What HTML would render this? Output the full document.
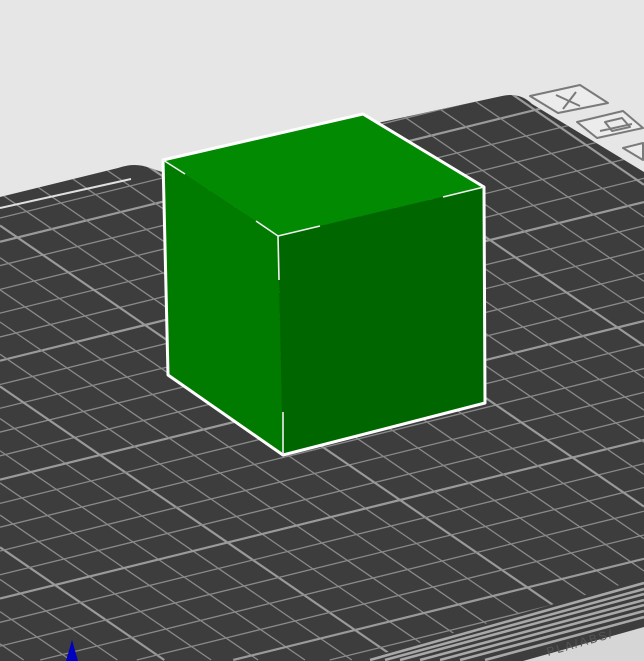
<!DOCTYPE html>
<html><head><meta charset="utf-8"><style>
html,body{margin:0;padding:0;background:#e6e6e6;width:644px;height:661px;overflow:hidden}
svg{display:block;overflow:hidden}
</style></head><body>
<svg id="s" width="644" height="661" viewBox="0 0 644 661" xmlns="http://www.w3.org/2000/svg">
<defs>
<clipPath id="bed"><path d="M0,197 L118,168 Q135,162 150,168 L168,174 L382,122 L502,96 Q520,92 532,104 L644,172 L644,578 L357,661 L0,661 Z"/></clipPath>
<clipPath id="front"><path d="M0,0 L644,0 L644,578 L357,661 L0,661 Z"/></clipPath>
</defs>
<path d="M0,197 L118,168 Q135,162 150,168 L168,174 L382,122 L502,96 Q520,92 532,104 L644,172 L644,661 L0,661 Z" fill="#3d3d3d"/>
<g id="grid" clip-path="url(#bed)"><g clip-path="url(#front)" stroke="#8a8a8a" fill="none"></g></g>
<line x1="0" y1="208" x2="131" y2="179" stroke="#e0e0e0" stroke-width="2"/>
<g stroke="#a8a8a8" stroke-width="2.6" fill="none">
<line x1="370" y1="660" x2="644" y2="583"/>
<line x1="385" y1="660" x2="644" y2="589"/>
<line x1="400" y1="660" x2="644" y2="594"/>
<line x1="420" y1="660" x2="644" y2="600"/>
<line x1="440" y1="660" x2="644" y2="605"/>
<line x1="460" y1="660" x2="644" y2="611"/>
<line x1="485" y1="660" x2="644" y2="617"/>
</g>
<path d="M523,661 L644,627 L644,661 Z" fill="#d6d6d6"/>
<text x="0" y="0" transform="translate(548,656) rotate(-16)" font-family="Liberation Sans, sans-serif" font-size="12" fill="#555" letter-spacing="2">PLA/ABS/</text>
<path d="M72,640 L78,661 L66,661 Z" fill="#0000c0"/>
<g fill="#ececec" stroke="#7a7a7a" stroke-width="2" stroke-linejoin="round">
<path d="M530,96 L580,85 L608,103 L558,113 Z"/>
<path d="M556,95 L580,106 M576,92 L563,109" fill="none"/>
<path d="M577,122 L623,111 L643,128 L597,138 Z"/>
<path d="M605,122 L622,118 L630,127 L612,131 Z M600,131 L632,124" fill="none"/>
<path d="M623,148 L643,143 L643,160 Z"/>
</g>
<polygon points="163,160 363,114 484,187 278,236" fill="#028a02"/>
<polygon points="163,160 278,236 283,455 168,375" fill="#007b00"/>
<polygon points="278,236 484,187 485,403 283,455" fill="#006700"/>
<polygon points="163,160 363,114 484,187 485,403 283,455 168,375" fill="none" stroke="#fff" stroke-width="3" stroke-linejoin="round"/>
<g stroke="#f0f0f0" stroke-width="1.6">
<line x1="278" y1="236" x2="256" y2="221"/><line x1="278" y1="236" x2="320" y2="226"/><line x1="278" y1="236" x2="279" y2="280"/>
<line x1="163" y1="160" x2="185" y2="174"/><line x1="484" y1="187" x2="443" y2="197"/><line x1="283" y1="455" x2="283" y2="412"/>
</g>
</svg>
<script>
(function(){
var g=document.querySelector('#grid g');var ns='http://www.w3.org/2000/svg';
var O=[400,500],a=[34.5,-8.5],b=[25.5,17.5];
var W=644,H=660;
function clip(p,d){
 var t0=-1e9,t1=1e9;
 var P=[[-d[0],p[0]],[d[0],W-p[0]],[-d[1],p[1]],[d[1],H-p[1]]];
 for(var i=0;i<4;i++){var pp=P[i][0],q=P[i][1];
  if(pp===0){if(q<0)return null;}else{var r=q/pp;if(pp<0){if(r>t0)t0=r;}else{if(r<t1)t1=r;}}}
 if(t0>t1)return null;
 return [[p[0]+t0*d[0],p[1]+t0*d[1]],[p[0]+t1*d[0],p[1]+t1*d[1]]];
}
function ln(p,d,w,c){var s=clip(p,d);if(!s)return;var l=document.createElementNS(ns,'line');
 l.setAttribute('x1',s[0][0]);l.setAttribute('y1',s[0][1]);l.setAttribute('x2',s[1][0]);l.setAttribute('y2',s[1][1]);
 l.setAttribute('stroke-width',w);if(c)l.setAttribute('stroke',c);g.appendChild(l);}
for(var k=-40;k<=40;k++){
 var w=(k%5==0)?2.2:1.3,c=(k%5==0)?'#9a9a9a':null;
 ln([O[0]+k*a[0],O[1]+k*a[1]],b,w,c);
 ln([O[0]+k*b[0],O[1]+k*b[1]],a,w,c);
}
})();
</script>
</body></html>
